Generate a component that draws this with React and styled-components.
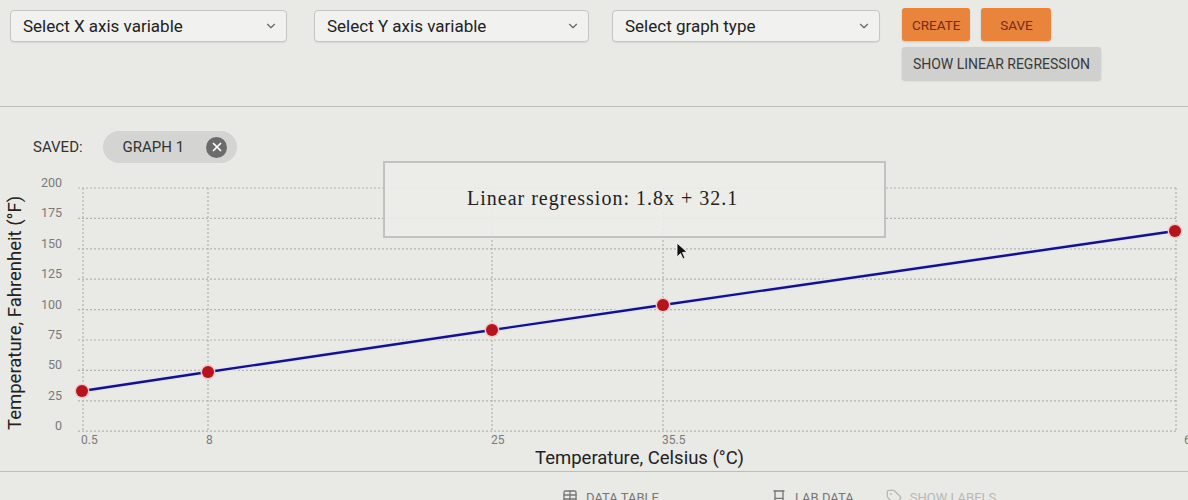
import React from 'react'
import styled, { createGlobalStyle } from 'styled-components'
import { ChevronDown, X, Table, Beaker, Tag } from 'lucide-react'

const GlobalStyle = createGlobalStyle`
  *, *::before, *::after {
    box-sizing: border-box;
  }
  body {
    margin: 0;
    background: #e9e9e6;
    font-family: Roboto, "Liberation Sans", sans-serif;
    color: #222;
    overflow: hidden;
  }
`

const Page = styled.div`
  width: 1188px;
  height: 500px;
  overflow: hidden;
  display: flex;
  flex-direction: column;
`

const Toolbar = styled.div`
  flex-shrink: 0;
  height: 107px;
  display: flex;
  align-items: flex-start;
  padding: 10px 0 0 10px;
  border-bottom: 1.5px solid #bdbdbb;
`

const Select = styled.div`
  width: ${p => p.$w}px;
  margin-right: ${p => p.$gap}px;
  height: 32px;
  display: flex;
  align-items: center;
  justify-content: space-between;
  padding: 0 8px 0 12px;
  background: #f1f1ef;
  border: 1px solid #c6c6c4;
  border-radius: 4px;
  box-shadow: 0 1px 1px rgba(0, 0, 0, 0.08);
  font-size: 17px;
  color: #222;
  svg {
    color: #666;
  }
`

const ButtonCol = styled.div`
  display: flex;
  flex-direction: column;
  gap: 6px;
  margin-top: -2px;
`

const ButtonRow = styled.div`
  display: flex;
  gap: 11px;
`

const Button = styled.button`
  height: 33px;
  min-width: ${p => p.$w || 0}px;
  padding: 0 10px;
  border: none;
  border-radius: 3px;
  font-family: Roboto, "Liberation Sans", sans-serif;
  font-size: ${p => (p.$orange ? 13.5 : 14)}px;
  text-transform: uppercase;
  background: ${p => (p.$orange ? '#e8843c' : '#d0d0ce')};
  color: ${p => (p.$orange ? '#7a2a16' : '#3a3a3a')};
  box-shadow: 0 1px 2px rgba(0, 0, 0, 0.15);
`

const ChartSection = styled.section`
  flex-shrink: 0;
  position: relative;
  height: 365px;
  border-bottom: 1.5px solid #bdbdbb;
  display: flex;
  flex-direction: column;
`

const SavedRow = styled.div`
  display: flex;
  align-items: center;
  gap: 20px;
  padding: 24px 0 0 33px;
  font-size: 15px;
  color: #333;
  text-transform: uppercase;
`

const Chip = styled.div`
  height: 32px;
  display: flex;
  align-items: center;
  gap: 22px;
  padding: 0 10px 0 20px;
  border-radius: 16px;
  background: #d4d4d2;
  color: #333;
`

const ChipClose = styled.span`
  width: 21px;
  height: 21px;
  border-radius: 50%;
  background: #6b6b6b;
  color: #fff;
  display: flex;
  align-items: center;
  justify-content: center;
`

const ChartBody = styled.div`
  display: flex;
  margin-top: 9px;
`

const YTitle = styled.div`
  width: 30px;
  height: 280px;
  display: flex;
  align-items: center;
  justify-content: center;
  padding-bottom: 2px;
  writing-mode: vertical-rl;
  transform: rotate(180deg);
  font-size: 18.5px;
  color: #222;
  white-space: nowrap;
`

const Plot = styled.div`
  display: flex;
  flex-direction: column;
`

const XTitle = styled.div`
  margin: -5px 0 0 505px;
  font-size: 18.5px;
  color: #222;
`

const RegressionBox = styled.div`
  position: absolute;
  left: 383px;
  top: 54px;
  width: 503px;
  height: 77px;
  padding: 24px 0 0 82px;
  border: 2px solid #c2c2c0;
  background: rgba(236, 236, 233, 0.92);
  font-family: "Liberation Serif", serif;
  font-size: 20px;
  letter-spacing: 1px;
  color: #222;
`

const BottomBar = styled.div`
  flex-shrink: 0;
  display: flex;
  align-items: center;
  gap: 12px;
  padding: 17px 0 0 562px;
  font-size: 13px;
  text-transform: uppercase;
`

const BottomItem = styled.div`
  display: flex;
  align-items: center;
  gap: 8px;
  margin-right: ${p => p.$gap || 0}px;
  color: ${p => (p.$faint ? '#b8b8b6' : '#777')};
`

const yTicks = [200, 175, 150, 125, 100, 75, 50, 25, 0]
const xTicks = [
  { x: 83, label: '0.5', at: 81 },
  { x: 208, label: '8', at: 206 },
  { x: 492, label: '25', at: 491 },
  { x: 663, label: '35.5', at: 662 },
  { x: 1176, label: '66', at: 1184 },
]
const points = [
  [82, 391],
  [208, 372],
  [492, 330],
  [663, 305],
  [1175, 231],
]

// chart is drawn in page coordinates and shifted into the svg box
function Chart() {
  const top = 188
  const step = 30.4
  const pts = points.map(p => p.join(',')).join(' ')
  return (
    <svg width="1158" height="280" viewBox="30 172 1158 280">
      {yTicks.map((v, i) => (
        <g key={v}>
          <line x1="78" x2="1178" y1={top + i * step} y2={top + i * step}
            stroke="#b3b3b1" strokeWidth="1.2" strokeDasharray="2 2" />
          <text x="62" y={top + i * step - 1} textAnchor="end" fontSize="12.5"
            fill="#7a7a7a" fontFamily="Roboto, sans-serif">{v}</text>
        </g>
      ))}
      {xTicks.map(t => (
        <g key={t.label}>
          <line x1={t.x} x2={t.x} y1={top} y2={top + 8 * step}
            stroke="#b3b3b1" strokeWidth="1.2" strokeDasharray="2 2" />
          <text x={t.at} y="444" fontSize="12" fill="#7a7a7a"
            fontFamily="Roboto, sans-serif">{t.label}</text>
        </g>
      ))}
      <polyline points={pts} fill="none" stroke="#dfe3ff" strokeWidth="5" />
      <polyline points={pts} fill="none" stroke="#16147a" strokeWidth="2.4" />
      {points.map(([x, y]) => (
        <g key={x}>
          <circle cx={x} cy={y} r="7.5" fill="#f3c9c6" />
          <circle cx={x} cy={y} r="6" fill="#b4141e" />
        </g>
      ))}
      <path d="M677 243 L677 257 L680.5 253.5 L683 259 L685 258 L682.5 252.5 L687 252 Z"
        fill="#111" stroke="#fff" strokeWidth="0.8" />
    </svg>
  )
}

export default function App() {
  return (
    <>
      <GlobalStyle />
      <Page>
        <Toolbar>
          <Select $w={277} $gap={27}>
            Select X axis variable <ChevronDown size={14} />
          </Select>
          <Select $w={275} $gap={23}>
            Select Y axis variable <ChevronDown size={14} />
          </Select>
          <Select $w={268} $gap={22}>
            Select graph type <ChevronDown size={14} />
          </Select>
          <ButtonCol>
            <ButtonRow>
              <Button $orange $w={68}>Create</Button>
              <Button $orange $w={70}>Save</Button>
            </ButtonRow>
            <Button $w={199}>Show linear regression</Button>
          </ButtonCol>
        </Toolbar>
        <ChartSection>
          <SavedRow>
            Saved:
            <Chip>
              Graph 1
              <ChipClose><X size={14} strokeWidth={3} /></ChipClose>
            </Chip>
          </SavedRow>
          <ChartBody>
            <YTitle>Temperature, Fahrenheit (°F)</YTitle>
            <Plot>
              <Chart />
              <XTitle>Temperature, Celsius (°C)</XTitle>
            </Plot>
          </ChartBody>
          <RegressionBox>Linear regression: 1.8x + 32.1</RegressionBox>
        </ChartSection>
        <BottomBar>
          <BottomItem $gap={100}><Table size={16} />Data table</BottomItem>
          <BottomItem $gap={20}><Beaker size={16} />Lab data</BottomItem>
          <BottomItem $faint><Tag size={16} />Show labels</BottomItem>
        </BottomBar>
      </Page>
    </>
  )
}
